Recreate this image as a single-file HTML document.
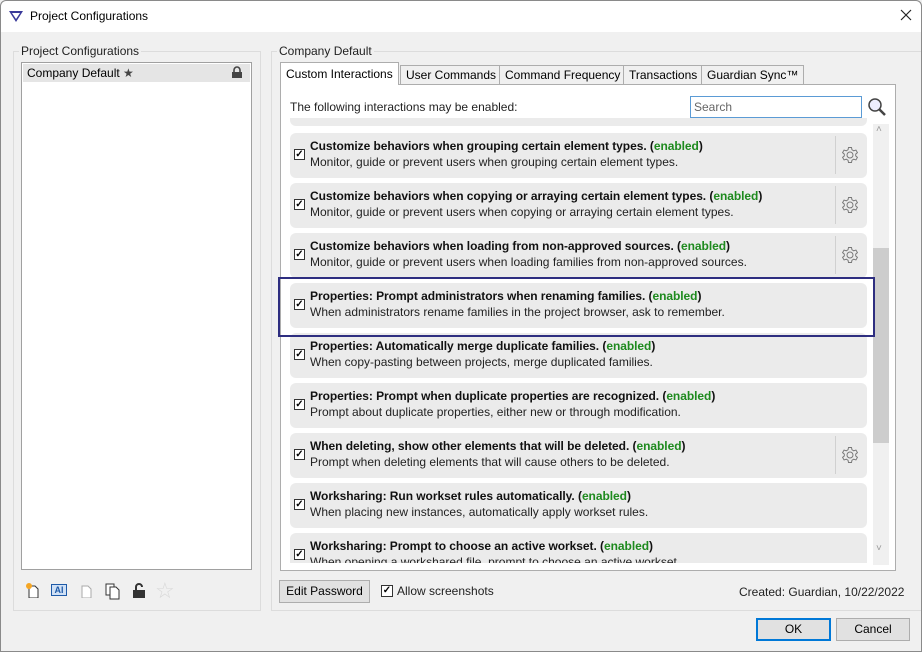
<!DOCTYPE html>
<html><head><style>
*{box-sizing:border-box;margin:0;padding:0}
body{width:922px;height:652px;background:#f0f0f0;font-family:"Liberation Sans",sans-serif;font-size:12px;color:#000;position:relative;overflow:hidden}
.a{position:absolute}
.win{left:0;top:0;width:922px;height:652px;border:1px solid #8a8a8a;border-radius:6px 6px 0 0}
.title{left:1px;top:1px;width:920px;height:31px;background:#fff;border-radius:6px 6px 0 0}
.grp{border:1px solid #dcdcdc}
.lbl{background:#f0f0f0;padding:0 2px;font-size:12px;color:#222}
.item{left:290px;width:577px;height:45px;background:#ebebeb;border-radius:6px;overflow:hidden}
.item .cb{position:absolute;left:4px;top:16px;width:11px;height:11px;border:1px solid #333;background:#fff;font-size:10px;line-height:9px;text-align:center;font-weight:bold}
.item .t{position:absolute;left:20px;top:6px;font-weight:bold;font-size:12px;white-space:nowrap;color:#111;letter-spacing:-0.05px}
.item .t b{color:#1e8a1e}
.item .s{position:absolute;left:20px;top:22px;font-size:12px;white-space:nowrap;color:#222}
.item .g{position:absolute;left:545px;top:3px;width:1px;height:38px;background:#d0d0d0}
.item .gear{position:absolute;left:551px;top:13px}
.tab{top:65px;height:20px;border:1px solid #adadad;background:#f0f0f0;padding:2px 5px;font-size:12px;white-space:nowrap}
.btn{border:1px solid #adadad;background:#e1e1e1;text-align:center;line-height:20px;font-size:12px}
</style></head><body>
<div class="a win"></div>
<div class="a title"></div>
<svg class="a" style="left:8px;top:8px" width="16" height="16" viewBox="0 0 16 16"><path d="M1 3 L15 3 L8 14 Z M4 5 L12 5 L8 11 Z" fill="#3a3a9a" fill-rule="evenodd"/></svg>
<div class="a" style="left:30px;top:9px;font-size:12px">Project Configurations</div>
<svg class="a" style="left:900px;top:9px" width="12" height="12"><path d="M1 1 L11 11 M11 1 L1 11" stroke="#222" stroke-width="1.2"/></svg>

<div class="a grp" style="left:13px;top:51px;width:248px;height:560px"></div>
<div class="a lbl" style="left:19px;top:44px">Project Configurations</div>
<div class="a" style="left:21px;top:62px;width:231px;height:508px;background:#fff;border:1px solid #a0a0a0"></div>
<div class="a" style="left:23px;top:64px;width:227px;height:18px;background:#e5e5e5"></div>
<div class="a" style="left:27px;top:66px">Company Default <span style="color:#444">★</span></div>
<svg class="a" style="left:231px;top:66px" width="12" height="12"><path d="M3 6 V4 A3 3 0 0 1 9 4 V6" stroke="#444" stroke-width="1.6" fill="none"/><rect x="1" y="6" width="10" height="6" fill="#444"/></svg>
<div class="a" style="left:25px;top:582px;font-size:13px;color:#444">
<svg width="16" height="16"><path d="M4 4 h6 l3 3 v9 h-9z" fill="#fff" stroke="#333"/><circle cx="4" cy="4" r="3" fill="#f5a623"/></svg>
</div>
<div class="a" style="left:51px;top:584px;width:16px;height:12px;border:1px solid #1e5aa8;background:#cfe0f5;font-size:9px;font-weight:bold;color:#1e5aa8;line-height:10px;text-align:center">AI</div>
<svg class="a" style="left:78px;top:582px" width="16" height="16"><path d="M4 4 h6 l3 3 v9 h-9z" fill="#fff" stroke="#aaa"/></svg>
<svg class="a" style="left:104px;top:582px" width="18" height="18"><path d="M2 2 h8 v11 h-8z" fill="#fff" stroke="#333"/><path d="M6 5 h6 l3 3 v9 h-9z" fill="#fff" stroke="#333"/></svg>
<svg class="a" style="left:132px;top:582px" width="14" height="16"><path d="M4 8 V5 A3 3 0 0 1 10 5" stroke="#333" stroke-width="2" fill="none"/><rect x="1" y="8" width="12" height="8" fill="#333"/></svg>
<div class="a" style="left:155px;top:578px;font-size:22px;color:#d8d8d8">☆</div>

<div class="a grp" style="left:271px;top:51px;width:650px;height:560px;border-right:none"></div>
<div class="a lbl" style="left:277px;top:44px">Company Default</div>
<div class="a" style="left:280px;top:84px;width:616px;height:487px;background:#fff;border:1px solid #adadad"></div>
<div class="a tab" style="left:280px;top:62px;height:23px;background:#fff;border-bottom:none;padding-top:4px">Custom Interactions</div>
<div class="a tab" style="left:400px">User Commands</div>
<div class="a tab" style="left:499px">Command Frequency</div>
<div class="a tab" style="left:623px">Transactions</div>
<div class="a tab" style="left:701px">Guardian Sync™</div>
<div class="a" style="left:290px;top:100px;color:#222">The following interactions may be enabled:</div>
<div class="a" style="left:690px;top:96px;width:172px;height:22px;border:1px solid #5b9bd5;background:#fff;color:#666;padding:3px 3px">Search</div>
<svg class="a" style="left:867px;top:97px" width="20" height="20"><circle cx="8" cy="8" r="6" fill="#eef" stroke="#444" stroke-width="1.5"/><path d="M12 12 L18 18" stroke="#444" stroke-width="2.5"/></svg>
<div class="a" style="left:290px;top:118px;width:577px;height:8px;background:#ebebeb;border-radius:0 0 6px 6px"></div>
<div class="a" style="left:873px;top:124px;width:16px;height:441px;background:#f0f0f0"></div>
<div class="a" style="left:873px;top:248px;width:16px;height:195px;background:#cdcdcd"></div>
<div class="a" style="left:876px;top:124px;font-size:10px;color:#999">˄</div>
<div class="a" style="left:876px;top:543px;font-size:10px;color:#999">˅</div>

<div style="position:absolute;left:0;top:0;width:922px;height:563px;overflow:hidden">
<div class="a item" style="top:133px"><div class="cb">✓</div><div class="t">Customize behaviors when grouping certain element types. (<b>enabled</b>)</div><div class="s">Monitor, guide or prevent users when grouping certain element types.</div><div class="g"></div><svg class="gear" width="18" height="18" viewBox="0 0 24 24"><path d="M12 8a4 4 0 1 0 0 8a4 4 0 1 0 0-8zM10 2h4l.6 3 2.4 1.4 2.9-1 2 3.4-2.3 2v2.4l2.3 2-2 3.4-2.9-1-2.4 1.4-.6 3h-4l-.6-3-2.4-1.4-2.9 1-2-3.4 2.3-2v-2.4l-2.3-2 2-3.4 2.9 1 2.4-1.4z" fill="none" stroke="#777" stroke-width="1.3"/></svg></div>
<div class="a item" style="top:183px"><div class="cb">✓</div><div class="t">Customize behaviors when copying or arraying certain element types. (<b>enabled</b>)</div><div class="s">Monitor, guide or prevent users when copying or arraying certain element types.</div><div class="g"></div><svg class="gear" width="18" height="18" viewBox="0 0 24 24"><path d="M12 8a4 4 0 1 0 0 8a4 4 0 1 0 0-8zM10 2h4l.6 3 2.4 1.4 2.9-1 2 3.4-2.3 2v2.4l2.3 2-2 3.4-2.9-1-2.4 1.4-.6 3h-4l-.6-3-2.4-1.4-2.9 1-2-3.4 2.3-2v-2.4l-2.3-2 2-3.4 2.9 1 2.4-1.4z" fill="none" stroke="#777" stroke-width="1.3"/></svg></div>
<div class="a item" style="top:233px"><div class="cb">✓</div><div class="t">Customize behaviors when loading from non-approved sources. (<b>enabled</b>)</div><div class="s">Monitor, guide or prevent users when loading families from non-approved sources.</div><div class="g"></div><svg class="gear" width="18" height="18" viewBox="0 0 24 24"><path d="M12 8a4 4 0 1 0 0 8a4 4 0 1 0 0-8zM10 2h4l.6 3 2.4 1.4 2.9-1 2 3.4-2.3 2v2.4l2.3 2-2 3.4-2.9-1-2.4 1.4-.6 3h-4l-.6-3-2.4-1.4-2.9 1-2-3.4 2.3-2v-2.4l-2.3-2 2-3.4 2.9 1 2.4-1.4z" fill="none" stroke="#777" stroke-width="1.3"/></svg></div>
<div class="a item" style="top:283px"><div class="cb">✓</div><div class="t">Properties: Prompt administrators when renaming families. (<b>enabled</b>)</div><div class="s">When administrators rename families in the project browser, ask to remember.</div></div>
<div class="a item" style="top:333px"><div class="cb">✓</div><div class="t">Properties: Automatically merge duplicate families. (<b>enabled</b>)</div><div class="s">When copy-pasting between projects, merge duplicated families.</div></div>
<div class="a item" style="top:383px"><div class="cb">✓</div><div class="t">Properties: Prompt when duplicate properties are recognized. (<b>enabled</b>)</div><div class="s">Prompt about duplicate properties, either new or through modification.</div></div>
<div class="a item" style="top:433px"><div class="cb">✓</div><div class="t">When deleting, show other elements that will be deleted. (<b>enabled</b>)</div><div class="s">Prompt when deleting elements that will cause others to be deleted.</div><div class="g"></div><svg class="gear" width="18" height="18" viewBox="0 0 24 24"><path d="M12 8a4 4 0 1 0 0 8a4 4 0 1 0 0-8zM10 2h4l.6 3 2.4 1.4 2.9-1 2 3.4-2.3 2v2.4l2.3 2-2 3.4-2.9-1-2.4 1.4-.6 3h-4l-.6-3-2.4-1.4-2.9 1-2-3.4 2.3-2v-2.4l-2.3-2 2-3.4 2.9 1 2.4-1.4z" fill="none" stroke="#777" stroke-width="1.3"/></svg></div>
<div class="a item" style="top:483px"><div class="cb">✓</div><div class="t">Worksharing: Run workset rules automatically. (<b>enabled</b>)</div><div class="s">When placing new instances, automatically apply workset rules.</div></div>
<div class="a item" style="top:533px"><div class="cb">✓</div><div class="t">Worksharing: Prompt to choose an active workset. (<b>enabled</b>)</div><div class="s">When opening a workshared file, prompt to choose an active workset.</div></div>
</div>
<div class="a" style="left:278px;top:277px;width:597px;height:60px;border:2px solid #2e2e80"></div>

<div class="a btn" style="left:279px;top:580px;width:91px;height:23px">Edit Password</div>
<div class="a" style="left:381px;top:585px;width:12px;height:12px;border:1px solid #333;background:#fff;font-size:10px;line-height:10px;text-align:center;font-weight:bold">✓</div>
<div class="a" style="left:397px;top:584px;color:#222">Allow screenshots</div>
<div class="a" style="left:739px;top:585px;color:#222">Created: Guardian, 10/22/2022</div>
<div class="a btn" style="left:756px;top:618px;width:75px;height:23px;border:2px solid #0078d7;line-height:19px">OK</div>
<div class="a btn" style="left:836px;top:618px;width:74px;height:23px">Cancel</div>
</body></html>
